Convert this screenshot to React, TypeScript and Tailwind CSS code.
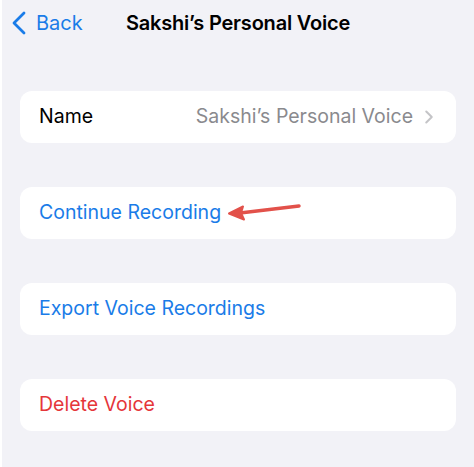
import { ChevronRight } from "lucide-react";

const font = { fontFamily: "Inter, 'Noto Sans', sans-serif" };

function Row({ children }: { children: React.ReactNode }) {
    return (
        <div className="flex items-center h-[52px] bg-white rounded-xl px-[19px] relative">
            {children}
        </div>
    );
}

// red callout arrow pointing left at the row label
function Pointer() {
    return (
        <svg className="absolute left-[206px] top-[14px]" width="84" height="24" viewBox="0 0 84 24">
            <line x1="73" y1="5" x2="14" y2="12" stroke="#e2514a" strokeWidth="3.5" strokeLinecap="round" />
            <path d="M3 12.5 L17 5.5 L15 12 L18 18.5 Z" fill="#e2514a" stroke="#e2514a" strokeWidth="2" strokeLinejoin="round" />
        </svg>
    );
}

export default function App() {
    return (
        <div className="w-[474px] h-[467px] bg-[#f2f2f7] border-l-2 border-white overflow-hidden" style={font}>
            <header className="relative flex items-center h-[46px]">
                <div className="flex items-center text-[#1a7ce8] pl-[9px]">
                    <svg width="16" height="24" viewBox="0 0 16 24" fill="none">
                        <path d="M13 2 L3 12 L13 22" stroke="currentColor" strokeWidth="2.8" strokeLinecap="round" strokeLinejoin="round" />
                    </svg>
                    <span className="text-[20px] ml-[9px]">Back</span>
                </div>
                <h1 className="absolute left-0 right-0 text-center text-[20px] font-semibold text-black tracking-[-0.2px]">
                    Sakshi’s Personal Voice
                </h1>
            </header>

            <div className="flex flex-col gap-[44px] px-[18px] pt-[45px]">
                <Row>
                    <span className="text-[19.5px] text-black">Name</span>
                    <span className="ml-auto text-[19.5px] text-[#8a8a8e]">Sakshi’s Personal Voice</span>
                    <ChevronRight className="w-[22px] h-[22px] text-[#c4c4c7] ml-[5px] mr-[-3px]" strokeWidth={2.2} />
                </Row>
                <Row>
                    <span className="text-[19.5px] text-[#1a7ce8]">Continue Recording</span>
                    <Pointer />
                </Row>
                <Row>
                    <span className="text-[19.5px] text-[#1a7ce8]">Export Voice Recordings</span>
                </Row>
                <Row>
                    <span className="text-[19.5px] text-[#e5363a]">Delete Voice</span>
                </Row>
            </div>
        </div>
    );
}
